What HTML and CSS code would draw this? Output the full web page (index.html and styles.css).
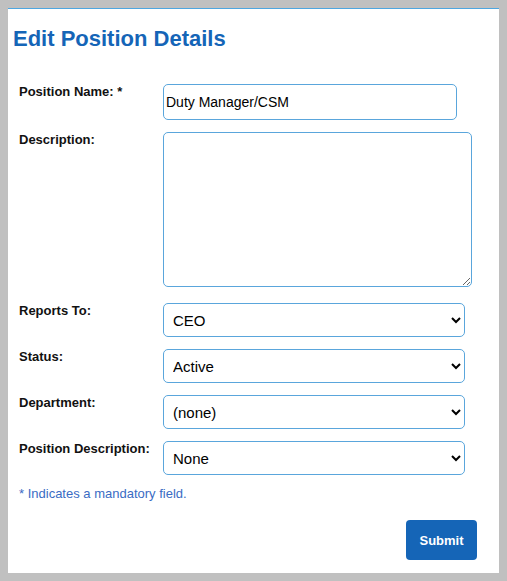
FILE: index.html
```html
<!DOCTYPE html>
<html lang="en">
<head>
<meta charset="utf-8">
<title>Edit Position Details</title>
<link rel="stylesheet" href="styles.css">
</head>
<body>
<div class="panel">
  <h1 class="title">Edit Position Details</h1>
  <form class="form">
    <div class="row row-name">
      <label class="label" for="pname">Position Name: *</label>
      <input class="field text" id="pname" type="text" value="Duty Manager/CSM">
    </div>
    <div class="row row-desc">
      <label class="label" for="pdesc">Description:</label>
      <textarea class="field area" id="pdesc"></textarea>
    </div>
    <div class="row row-first-select">
      <label class="label" for="reports">Reports To:</label>
      <select class="field select" id="reports"><option>CEO</option></select>
    </div>
    <div class="row row-select">
      <label class="label" for="status">Status:</label>
      <select class="field select" id="status"><option>Active</option></select>
    </div>
    <div class="row row-select">
      <label class="label" for="dept">Department:</label>
      <select class="field select" id="dept"><option>(none)</option></select>
    </div>
    <div class="row row-select">
      <label class="label" for="pd">Position Description:</label>
      <select class="field select" id="pd"><option>None</option></select>
    </div>
    <p class="note">* Indicates a mandatory field.</p>
    <div class="actions">
      <button class="submit" type="button">Submit</button>
    </div>
  </form>
</div>
</body>
</html>
```
FILE: styles.css
```css
html, body {
  margin: 0;
  padding: 0;
}
body {
  background: #c0c0c0;
  padding: 8px;
  font-family: "Liberation Sans", Arial, sans-serif;
}
.panel {
  background: #ffffff;
  border-top: 1px solid #4ea6e0;
  padding: 0 22px 13px 5px;
}
.title {
  margin: 17px 0 0 0;
  font-size: 22px;
  line-height: 25px;
  font-weight: bold;
  color: #1565b7;
}
.form {
  margin: 33px 0 0 6px;
}
.row {
  display: flex;
  align-items: flex-start;
}
.row-desc {
  margin-top: 12px;
}
.row-first-select {
  margin-top: 16px;
}
.row-select {
  margin-top: 12px;
}
.label {
  width: 144px;
  flex: none;
  font-size: 13px;
  line-height: 15px;
  font-weight: bold;
  color: #111111;
  padding-top: 0;
}
.field {
  box-sizing: border-box;
  border: 1px solid #5aa6dc;
  border-radius: 5px;
  background: #ffffff;
  color: #000000;
  font-family: "Liberation Sans", Arial, sans-serif;
  margin: 0;
  outline: none;
}
.text {
  width: 294px;
  height: 36px;
  font-size: 14px;
  padding: 0 2px;
}
.area {
  width: 309px;
  height: 155px;
  display: block;
  padding: 2px;
  font-size: 14px;
}
.select {
  width: 302px;
  height: 34px;
  font-size: 15px;
  padding: 0 4px 0 5px;
}
.note {
  margin: 11px 0 0 0;
  font-size: 13px;
  line-height: 15px;
  color: #3a6cc4;
}
.actions {
  display: flex;
  justify-content: flex-end;
  margin-top: 19px;
}
.submit {
  width: 71px;
  height: 40px;
  border: none;
  border-radius: 4px;
  background: #1565b7;
  color: #ffffff;
  font-family: "Liberation Sans", Arial, sans-serif;
  font-size: 13px;
  font-weight: bold;
  padding: 0;
}
```
